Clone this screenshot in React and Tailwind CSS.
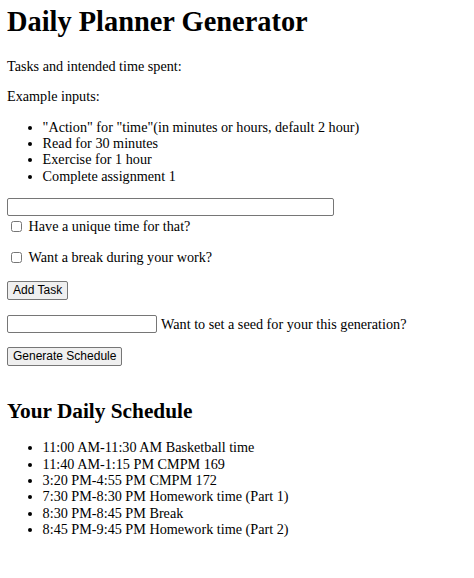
export default function App() {
  const examples = [
    '"Action" for "time"(in minutes or hours, default 2 hour)',
    'Read for 30 minutes',
    'Exercise for 1 hour',
    'Complete assignment 1',
  ];
  const schedule = [
    '11:00 AM-11:30 AM Basketball time',
    '11:40 AM-1:15 PM CMPM 169',
    '3:20 PM-4:55 PM CMPM 172',
    '7:30 PM-8:30 PM Homework time (Part 1)',
    '8:30 PM-8:45 PM Break',
    '8:45 PM-9:45 PM Homework time (Part 2)',
  ];
  const btn =
    "h-[19px] px-[5px] bg-[#efefef] border border-[#767676] rounded-[2px] text-[12px] text-black font-['Liberation_Sans',Arial,sans-serif] leading-none";
  return (
    <div className="min-h-[578px] bg-white text-black px-[7px] pt-[6px] font-['Liberation_Serif','Times_New_Roman',serif] text-[14.2px] leading-[1.15]">
      <h1 className="text-[28.4px] font-bold leading-[1.15] mb-[19px]">Daily Planner Generator</h1>
      <p className="mb-[14.2px]">Tasks and intended time spent:</p>
      <p className="mb-[14.2px]">Example inputs:</p>
      <ul className="list-disc pl-[35.6px] mb-[14.2px]">
        {examples.map((e) => (
          <li key={e}>{e}</li>
        ))}
      </ul>
      <input
        type="text"
        className="block w-[327px] h-[18px] border border-[#767676] rounded-[2px] bg-white"
      />
      <label className="flex items-center h-[16.3px] mt-[2px]">
        <input type="checkbox" className="w-[11.5px] h-[11.5px] ml-[3.5px] mr-[3px] m-0" />
        <span className="ml-[3.5px]">Have a unique time for that?</span>
      </label>
      <label className="flex items-center h-[16.3px] mt-[15px]">
        <input type="checkbox" className="w-[11.5px] h-[11.5px] ml-[3.5px] mr-[3px] m-0" />
        <span className="ml-[3.5px]">Want a break during your work?</span>
      </label>
      <div className="mt-[15px]">
        <button className={btn}>Add Task</button>
      </div>
      <div className="mt-[15px] flex items-center">
        <input
          type="text"
          className="w-[150px] h-[18px] border border-[#767676] rounded-[2px] bg-white"
        />
        <span className="ml-[4px]">Want to set a seed for your this generation?</span>
      </div>
      <div className="mt-[14px]">
        <button className={btn}>Generate Schedule</button>
      </div>
      <h2 className="text-[21.3px] font-bold leading-[1.15] mt-[33px] mb-[16px]">Your Daily Schedule</h2>
      <ul className="list-disc pl-[35.6px]">
        {schedule.map((s) => (
          <li key={s}>{s}</li>
        ))}
      </ul>
    </div>
  );
}
